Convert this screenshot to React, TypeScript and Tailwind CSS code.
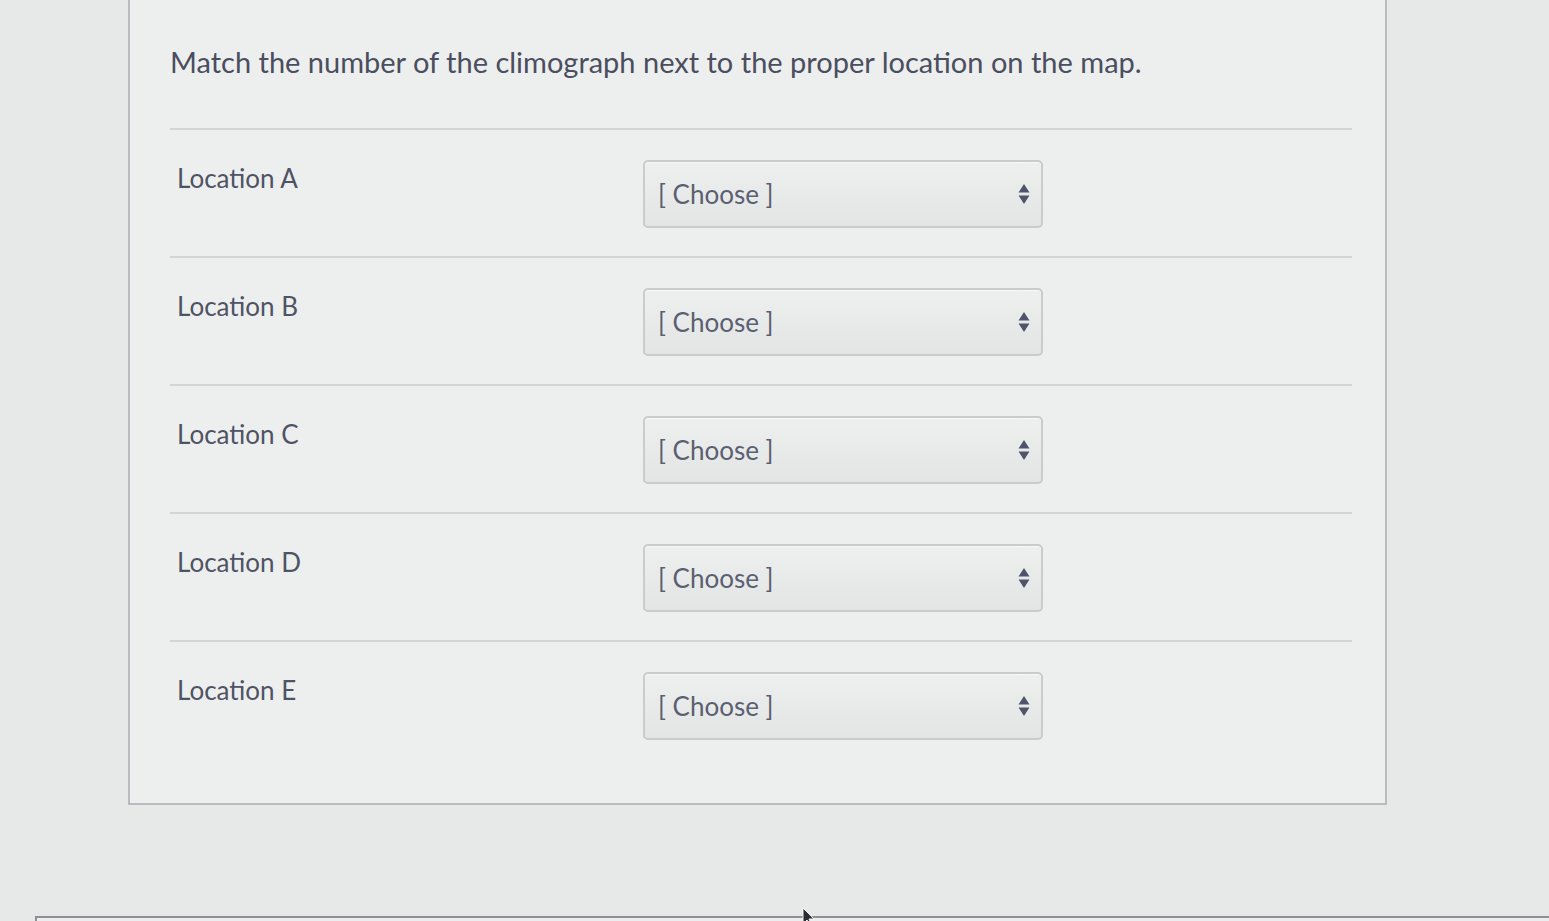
import React from "react";

const locations = ["Location A", "Location B", "Location C", "Location D", "Location E"];

function SortArrows() {
  return (
    <svg width="14" height="24" viewBox="0 0 14 24" aria-hidden="true">
      <path d="M7 2 L12.5 10.5 H1.5 Z" fill="#4f5568" />
      <path d="M7 22 L12.5 13.5 H1.5 Z" fill="#4f5568" />
    </svg>
  );
}

function ChooseSelect() {
  return (
    <div className="w-[400px] h-[68px] rounded-[5px] border-2 border-[#c9cbcd] bg-gradient-to-b from-[#eef0ef] to-[#e3e5e5] shadow-[inset_0_1px_0_#f6f7f7] flex items-center justify-between pl-[13px] pr-[10px]">
      <span className="text-[26px] text-[#5b5f72]">[ Choose ]</span>
      <SortArrows />
    </div>
  );
}

export default function App() {
  return (
    <div
      className="relative w-[1549px] h-[921px] overflow-hidden bg-[#e7e9e8]"
      style={{ fontFamily: "Lato, 'Open Sans', sans-serif" }}
    >
      <div className="ml-[128px] w-[1259px] h-[805px] border-x-2 border-b-2 border-[#b9bbbf] bg-[#edefee] pl-[40px] pr-[33px]">
        <h1 className="pt-[43px] pb-[47px] text-[29px] leading-[38px] text-[#4a4e5e] font-normal">
          Match the number of the climograph next to the proper location on the map.
        </h1>
        {locations.map((name) => (
          <div key={name} className="flex h-[128px] border-t-2 border-[#d3d5d6]">
            <div className="w-[473px] pl-[7px] pt-[31px] text-[26px] leading-[34px] text-[#4f5363]">
              {name}
            </div>
            <div className="pt-[30px]">
              <ChooseSelect />
            </div>
          </div>
        ))}
      </div>

      {/* top edge of the next card */}
      <div className="ml-[35px] mt-[111px] h-[10px] border-t-2 border-l-2 border-[#8d9094] bg-[#eceeed]" />

      {/* mouse pointer */}
      <svg className="absolute left-[802px] top-[907px]" width="14" height="20" viewBox="0 0 14 20" aria-hidden="true">
        <path d="M1 1 L1 17 L5 13 L8 19 L10 18 L7 12 L12 12 Z" fill="#2b2d33" stroke="#f4f4f4" strokeWidth="1" />
      </svg>
    </div>
  );
}
